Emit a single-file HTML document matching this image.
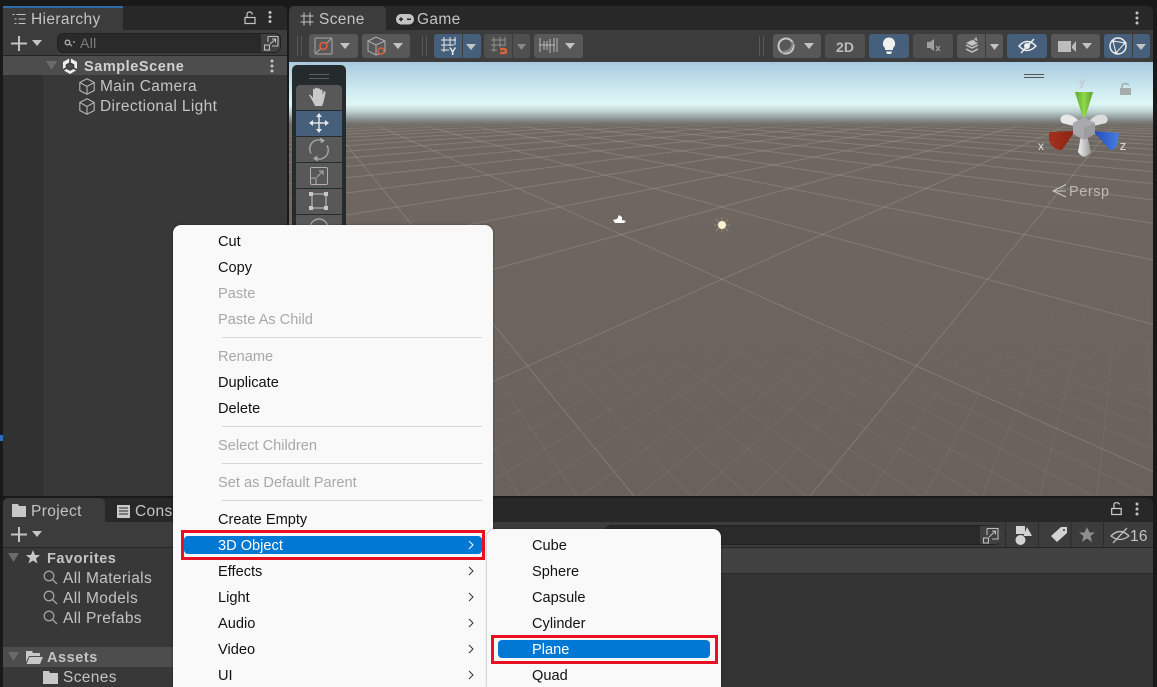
<!DOCTYPE html>
<html><head><meta charset="utf-8"><style>
html,body{margin:0;padding:0;width:1157px;height:687px;overflow:hidden;background:#191919}
body{position:relative;font-family:"Liberation Sans",sans-serif}
.b{position:absolute}
.t{position:absolute;white-space:nowrap;line-height:20px;font-size:15.5px;color:#c4c4c4;letter-spacing:.36px;margin-top:3px}
.btn{position:absolute;top:34px;height:24px;background:#585858;border-radius:3px}
.blue{background:#46607c}
.sep{position:absolute;top:0;bottom:0;width:1px;background:#3c3c3c}
.tb{position:absolute;left:296px;width:46px;height:25px;background:#585858}
svg{position:absolute;overflow:visible}
.m{position:absolute;white-space:nowrap;line-height:20px;font-size:14.6px;color:#111;font-family:"Liberation Sans",sans-serif;margin-top:1px}
.d{color:#a8a8a8}
.hr{position:absolute;left:222px;width:260px;height:1px;background:#d6d6d6}
.tri{fill:#c4c4c4}
</style></head><body>

<!-- hierarchy -->
<div class="b" style="left:0;top:435px;width:3px;height:6px;background:#2a70b8"></div>
<div class="b" style="left:3px;top:6px;width:284px;height:24px;background:#282828;border-radius:5px 5px 0 0"></div>
<div class="b" style="left:3px;top:6px;width:120px;height:24px;background:#3c3c3c;border-top:2px solid #2f6ca8;box-sizing:border-box"></div>
<div class="b" style="left:3px;top:30px;width:284px;height:25px;background:#3c3c3c"></div>
<div class="b" style="left:3px;top:55px;width:284px;height:441px;background:#383838"></div>
<div class="b" style="left:3px;top:55px;width:40px;height:441px;background:#313131"></div>
<div class="b" style="left:3px;top:55px;width:284px;height:1px;background:#232323"></div>
<div class="b" style="left:3px;top:56px;width:284px;height:19px;background:#4d4d4d"></div>
<svg style="left:12px;top:13px" width="14" height="12" fill="none" stroke="#c4c4c4" stroke-width="1"><path d="M4.500 1.500H13.500M6.500 6H13.500M6.500 10.500H13.500M.5 1.500H2.500M2.500 6H4.500M2.500 10.500H4.500"/></svg>
<div class="t" style="left:31px;top:7px">Hierarchy</div>
<svg style="left:244px;top:11px" width="14" height="14" fill="none" stroke="#c4c4c4" stroke-width="1.200"><rect x="1" y="6.500" width="10" height="6"/><path d="M3 6.500V3.500Q3 1 5.500 1Q8 1 8.500 3.500"/></svg>
<svg style="left:268px;top:10px" width="4" height="14" fill="#c4c4c4"><circle cx="2" cy="2.500" r="1.500"/><circle cx="2" cy="7" r="1.500"/><circle cx="2" cy="11.500" r="1.500"/></svg>
<svg style="left:11px;top:36px" width="34" height="15"><path d="M8 0V15M0 7.500H16" stroke="#c4c4c4" stroke-width="2"/><path class="tri" d="M21 4H31L26 10Z"/></svg>
<div class="b" style="left:57px;top:33px;width:224px;height:20px;background:#2a2a2a;border-radius:6px;border:1px solid #222;box-sizing:border-box"></div>
<div class="b" style="left:261px;top:34px;width:19px;height:18px;background:#404040;border-radius:0 5px 5px 0"></div>
<svg style="left:64px;top:39px" width="12" height="9" fill="none" stroke="#b0b0b0" stroke-width="1.300"><circle cx="3.500" cy="3.500" r="2.300"/><path d="M5.500 5L8 7M9 3H11"/></svg>
<div class="t" style="left:80px;top:30px;color:#7e7e7e;font-size:14px">All</div>
<svg style="left:264px;top:36px" width="15" height="15" fill="none" stroke="#bdbdbd" stroke-width="1.100"><path d="M4 .5H14V10H8M4 .5V6M6 8L11 3.500M8 3H11.500V6.500"/><rect x=".5" y="9" width="5" height="5"/></svg>
<svg style="left:46px;top:61px" width="12" height="10"><path d="M0 0H11L5.500 9Z" fill="#6a6a6a"/></svg>
<svg style="left:62px;top:58px" width="16" height="16"><path d="M8 0L15 4V12L8 16L1 12V4Z" fill="#eee"/><path d="M8 5L11.500 7V10L8 12L4.500 10V7ZM8 0V5M1 12L4.500 10M15 12L11.500 10" stroke="#3d3d3d" stroke-width="1.600" fill="#4d4d4d"/></svg>
<div class="t" style="left:84px;top:54px;font-weight:bold;font-size:14.500px;letter-spacing:.55px;color:#d2d2d2">SampleScene</div>
<svg style="left:270px;top:59px" width="4" height="14" fill="#c4c4c4"><circle cx="2" cy="2" r="1.500"/><circle cx="2" cy="7" r="1.500"/><circle cx="2" cy="12" r="1.500"/></svg>
<svg style="left:79px;top:78px" width="16" height="17" fill="none" stroke="#b4b4b4" stroke-width="1.100"><path d="M8 .8L15.200 4.500V12.500L8 16.200L.8 12.500V4.500ZM.8 4.500L8 8.500L15.200 4.500M8 8.500V16.200"/></svg>
<svg style="left:79px;top:98px" width="16" height="17" fill="none" stroke="#b4b4b4" stroke-width="1.100"><path d="M8 .8L15.200 4.500V12.500L8 16.200L.8 12.500V4.500ZM.8 4.500L8 8.500L15.200 4.500M8 8.500V16.200"/></svg>
<div class="t" style="left:100px;top:74px">Main Camera</div>
<div class="t" style="left:100px;top:94px">Directional Light</div>

<!-- scene header -->
<div class="b" style="left:289px;top:6px;width:864px;height:24px;background:#282828;border-radius:5px 5px 0 0"></div>
<div class="b" style="left:289px;top:6px;width:97px;height:24px;background:#3c3c3c;border-radius:5px 5px 0 0"></div>
<div class="b" style="left:289px;top:30px;width:864px;height:32px;background:#3c3c3c"></div>
<svg style="left:300px;top:12px" width="14" height="14" stroke="#c4c4c4" stroke-width="1"><path d="M4 .5V13.500M10 .5V13.500M.5 4H13.500M.5 10H13.500"/></svg>
<div class="t" style="left:319px;top:7px">Scene</div>
<svg style="left:396px;top:14px" width="18" height="11"><rect x="0" y="0" width="18" height="10.500" rx="5" fill="#c4c4c4"/><path d="M3 5.200H7M5 3.200V7.200M11 5.200H15" stroke="#282828" stroke-width="1.500"/></svg>
<div class="t" style="left:417px;top:7px">Game</div>
<svg style="left:1135px;top:11px" width="4" height="14" fill="#c4c4c4"><circle cx="2" cy="2" r="1.500"/><circle cx="2" cy="7" r="1.500"/><circle cx="2" cy="12" r="1.500"/></svg>

<!-- toolbar -->
<svg style="left:297px;top:36px" width="6" height="20" stroke="#585858"><path d="M.5 0V20M4.500 0V20"/></svg>
<svg style="left:422px;top:36px" width="6" height="20" stroke="#585858"><path d="M.5 0V20M4.500 0V20"/></svg>
<svg style="left:759px;top:36px" width="6" height="20" stroke="#585858"><path d="M.5 0V20M4.500 0V20"/></svg>
<div class="btn" style="left:309px;width:49px"></div>
<div class="btn" style="left:362px;width:48px"></div>
<div class="btn blue" style="left:434px;width:47px"><div class="sep" style="left:28px;background:#3c3c3c"></div></div>
<div class="btn" style="left:484px;width:46px;background:#4f4f4f"><div class="sep" style="left:28px"></div></div>
<div class="btn" style="left:534px;width:49px"></div>
<div class="btn" style="left:773px;width:48px"></div>
<div class="btn" style="left:825px;width:40px;background:#505050"></div>
<div class="btn blue" style="left:869px;width:40px"></div>
<div class="btn" style="left:913px;width:40px;background:#505050"></div>
<div class="btn" style="left:957px;width:46px"><div class="sep" style="left:28px"></div></div>
<div class="btn blue" style="left:1007px;width:40px"></div>
<div class="btn" style="left:1051px;width:49px"></div>
<div class="btn blue" style="left:1104px;width:46px"><div class="sep" style="left:28px"></div></div>
<svg style="left:0;top:0" width="1157" height="62">
<g class="tri"><path d="M340 43H350L345 49Z"/><path d="M393 43H403L398 49Z"/><path d="M466 44H476L471 50Z"/><path d="M517 44H526L521.500 50Z" style="fill:#8a8a8a"/><path d="M565 43H575L570 49Z"/><path d="M804 43H814L809 49Z"/><path d="M990 44H999L994.500 50Z"/><path d="M1082 43H1092L1087 49Z"/><path d="M1136 44H1146L1141 50Z"/></g>
<rect x="315" y="38" width="17" height="16" rx="1" fill="none" stroke="#aaa"/><path d="M316 53L331 39" stroke="#aaa"/><circle cx="323.500" cy="46" r="3.500" fill="#585858" stroke="#e2603a" stroke-width="1.500"/>
<path d="M368 41L376 37L385 41V52L376 55L368 51ZM368 41L376 45L385 41M376 45V55" fill="none" stroke="#b0b0b0"/><circle cx="381" cy="51" r="3" fill="#585858" stroke="#e2603a" stroke-width="1.500"/>
<path d="M441 40H456M441 45H454M441 50H449M444 37V52M450 37V46M455 37V45" stroke="#e8e8e8" fill="none"/><text x="449" y="55" font-family="Liberation Sans" font-size="11" font-weight="bold" fill="#eee">Y</text>
<path d="M491 40H505M491 45H505M491 50H497M494 37V52M500 37V47M505 37V46" stroke="#929292" fill="none"/><path d="M500 49H504Q506 49 506 51T504 53H500" fill="none" stroke="#d8633a" stroke-width="2.500"/>
<path d="M540 38V52M554 38V52M539 45H555M544 41V50M547 41V50M550 39V53M557 38V52" stroke="#b8b8b8" fill="none"/>
<circle cx="786" cy="46" r="7.500" fill="none" stroke="#c6c6c6" stroke-width="2"/><path d="M782 52Q792 52 793 42" stroke="#8a8a8a" stroke-width="2" fill="none"/>
<text x="845" y="52" text-anchor="middle" font-family="Liberation Sans" font-size="14" font-weight="bold" fill="#bdbdbd">2D</text>
<path d="M889 37.500a6 6 0 0 1 4 10.500v2h-8v-2a6 6 0 0 1 4-10.500ZM886 51.500h6l-1 2.500h-4Z" fill="#f0f0f0"/>
<path d="M927 42H930L934 39V51L930 48H927Z" fill="#a0a0a0"/><path d="M936 46L940 51M940 46L936 51" stroke="#a0a0a0" stroke-width="1.300"/>
<path d="M966 45L972 48L978 45M966 49L972 52L978 49" fill="none" stroke="#c4c4c4" stroke-width="1.500"/><path d="M966 43L972 40L978 43L972 46Z" fill="#c4c4c4"/><path d="M973 42L976 38L977 41L976 38" stroke="#c4c4c4"/>
<path d="M1019 46Q1027 37 1036 46Q1027 55 1019 46Z" fill="none" stroke="#eee" stroke-width="1.500"/><circle cx="1027" cy="46" r="3" fill="#eee"/><path d="M1021 53L1034 39" stroke="#eee" stroke-width="1.500"/>
<rect x="1058" y="41" width="13" height="11" fill="#bcbcbc"/><path d="M1072 46L1076 41V52L1072 48Z" fill="#bcbcbc"/>
<circle cx="1118" cy="46" r="8" fill="none" stroke="#eee" stroke-width="1.500"/><path d="M1113 41L1125 43L1116 53ZM1113 41L1116 53" fill="none" stroke="#eee"/><circle cx="1113" cy="41" r="1.500" fill="#eee"/><circle cx="1125" cy="43" r="1.500" fill="#eee"/><circle cx="1116" cy="53" r="1.500" fill="#eee"/>
</svg>

<!-- scene view -->
<svg id="view" style="left:289px;top:62px;overflow:hidden" width="864" height="434" viewBox="289 62 864 434">
<defs>
<linearGradient id="floor" x1="0" y1="0" x2="0" y2="1"><stop offset="0" stop-color="#706861"/><stop offset="1" stop-color="#69615b"/></linearGradient>
<linearGradient id="sky" x1="0" y1="0" x2="0" y2="1"><stop offset="0" stop-color="#a8c9e0"/><stop offset=".4" stop-color="#cdeaef"/><stop offset=".62" stop-color="#def7f5"/><stop offset=".72" stop-color="#c0d4d4" /><stop offset=".84" stop-color="#8b9292"/><stop offset=".92" stop-color="#6f6c68" stop-opacity=".8"/><stop offset="1" stop-color="#6c6560" stop-opacity="0"/></linearGradient>
<linearGradient id="mn" gradientUnits="userSpaceOnUse" x1="0" y1="270" x2="0" y2="496"><stop offset="0" stop-color="#fff" stop-opacity="0"/><stop offset="1" stop-color="#fff" stop-opacity=".07"/></linearGradient>
</defs>
<rect x="289" y="62" width="864" height="434" fill="url(#floor)"/>
<g id="minor" fill="none" stroke="url(#mn)" stroke-width="1"></g>
<g id="major" fill="none" stroke="#a6a29c" stroke-opacity=".38" stroke-width="1"></g>
<rect x="289" y="62" width="864" height="68" fill="url(#sky)"/>
</svg>
<script>
(function(){
var N='http://www.w3.org/2000/svg',mj=document.getElementById('major'),mn=document.getElementById('minor');
function add(g,vx,x){var l=document.createElementNS(N,'line');l.setAttribute('x1',vx);l.setAttribute('y1',93);l.setAttribute('x2',x);l.setAttribute('y2',496);g.appendChild(l);}
for(var k=-3;k<=34;k++){add(mj,304,634+574*k);add(mj,1140,810-574*k);}
for(var i=-60;i<=90;i++){if(((i%10)+10)%10==0)continue;add(mn,304,634+57.4*i);add(mn,1140,810-57.4*i);}
})();
</script>

<!-- tools panel -->
<div class="b" style="left:292px;top:65px;width:54px;height:170px;background:#252a2c;border-radius:5px 5px 0 0"></div>
<svg style="left:309px;top:74px" width="20" height="5" stroke="#5e6264"><path d="M0 .5H20M0 4.500H20"/></svg>
<div class="tb" style="top:85px;border-radius:4px 4px 0 0"></div>
<div class="tb" style="top:111px;background:#46607c"></div>
<div class="tb" style="top:137px"></div>
<div class="tb" style="top:163px"></div>
<div class="tb" style="top:189px"></div>
<div class="tb" style="top:215px;height:20px"></div>
<svg style="left:296px;top:85px" width="46" height="150">
<path d="M16 15L13 10Q14 9 15.500 11L17 13V4Q18.500 3 19 5V10V3Q20.500 2 21.500 4V10V3Q23 3 24 4V10V5Q25.500 4 26.500 5V10L28 6Q29.500 6 29.500 8L28 15Q27 19 26 21H19Q17.500 18 16 15Z" fill="#c8c8c8"/>
<path d="M23 30V46M15 38H31" stroke="#e0e0e0" stroke-width="1.500"/><path d="M23 28L26 32H20ZM23 48L26 44H20ZM13 38L17 35V41ZM33 38L29 35V41Z" fill="#e8e8e8"/>
<g transform="translate(0,-1.500)"><path d="M15 70A9 9 0 0 1 26 57M31 62A9 9 0 0 1 20 75" fill="none" stroke="#a8a8a8" stroke-width="1.300"/><path d="M24 54L29 57L25 60ZM22 78L17 75L21 72Z" fill="#a8a8a8"/></g>
<rect x="14.500" y="82.500" width="17" height="17" rx="1.500" fill="none" stroke="#b0b0b0"/><path d="M14.500 93H20V99M21 92L27 86M23 86H27V90" fill="none" stroke="#b0b0b0"/>
<path d="M16 109H30M16 123H30M16 109V123M30 109V123" stroke="#c8c8c8" fill="none"/><path d="M13 107h4v4h-4ZM28 107h4v4h-4ZM13 121h4v4h-4ZM28 121h4v4h-4Z" fill="#c8c8c8"/>
<circle cx="23" cy="143" r="9" fill="none" stroke="#b0b0b0" stroke-width="1.200"/><circle cx="23" cy="143" r="2" fill="#c8c8c8"/>
</svg>

<!-- gizmo -->
<svg style="left:1030px;top:65px" width="110" height="100" viewBox="1030 65 110 100">
<defs>
<linearGradient id="g1" x1="0" x2="1"><stop offset="0" stop-color="#5ca82c"/><stop offset=".5" stop-color="#8ed84c"/><stop offset="1" stop-color="#5aa02c"/></linearGradient>
<linearGradient id="g2" x1="0" x2="1"><stop offset="0" stop-color="#a5301c"/><stop offset="1" stop-color="#8a2413"/></linearGradient>
<linearGradient id="g3" x1="0" x2="1"><stop offset="0" stop-color="#1f4bb0"/><stop offset="1" stop-color="#4a7de8"/></linearGradient>
<linearGradient id="g4" x1="0" x2="1"><stop offset="0" stop-color="#f0f0f0"/><stop offset="1" stop-color="#9a9a9a"/></linearGradient>
</defs>
<path d="M1082 128L1062 123Q1058 118 1064 115Q1070 113 1078 120Z" fill="#e8e8e8"/>
<path d="M1086 128L1106 123Q1110 118 1104 115Q1098 113 1090 120Z" fill="#dcdcdc"/>
<path d="M1081 135L1078 152Q1084 161 1091 152L1087 135Z" fill="url(#g4)"/>
<path d="M1075 92H1093L1085 118H1083Z" fill="url(#g1)"/>
<path d="M1049 132L1075 131L1062 150Q1052 150 1049 140Z" fill="url(#g2)"/>
<path d="M1093 131L1119 133L1118 142Q1116 150 1110 150Z" fill="url(#g3)"/>
<path d="M1084 117L1095 123V134L1084 140L1073 134V123Z" fill="#a9a9ae"/><path d="M1084 128L1095 123V134L1084 140Z" fill="#9c9ca0"/>
<text x="1041" y="150" font-family="Liberation Sans" font-size="12" fill="#e0e0e0" text-anchor="middle">x</text>
<text x="1123" y="150" font-family="Liberation Sans" font-size="13" fill="#e0e0e0" text-anchor="middle">z</text>
<text x="1082" y="86" font-family="Liberation Sans" font-size="13" fill="#bfc6c6" text-anchor="middle">y</text>
<path d="M1120 88H1131V95H1120Z" fill="#a4acac"/><path d="M1122 88V85Q1125 82 1129 85" fill="none" stroke="#a4acac" stroke-width="1.500"/>
<path d="M1024 74.500H1044M1024 77.500H1044" stroke="#555" stroke-width="1"/>
</svg>
<svg style="left:1052px;top:184px" width="15" height="14" fill="none" stroke="#c8c8c8"><path d="M14 .5L1 7L14 13M1 7H14"/></svg>
<div class="t" style="left:1069px;top:179px;color:#bdb9b5;font-size:14.500px;letter-spacing:.55px">Persp</div>
<svg style="left:612px;top:214px" width="15" height="11"><path d="M1 6L5 5L7 1L10 3L10 6L14 7L12 9H3Z" fill="#fff"/></svg>
<svg style="left:714px;top:217px" width="16" height="16"><path d="M8 0V16M0 8H16M2 2L14 14M14 2L2 14" stroke="#8f8b7a"/><circle cx="8" cy="8" r="4" fill="#fdf1cd"/></svg>

<!-- bottom panel -->
<div class="b" style="left:3px;top:498px;width:1150px;height:24px;background:#282828;border-radius:5px 5px 0 0"></div>
<div class="b" style="left:3px;top:498px;width:102px;height:24px;background:#3c3c3c;border-radius:5px 5px 0 0"></div>
<div class="b" style="left:3px;top:522px;width:1150px;height:25px;background:#3c3c3c"></div>
<div class="b" style="left:3px;top:547px;width:1150px;height:1px;background:#262626"></div>
<div class="b" style="left:3px;top:548px;width:1150px;height:139px;background:#383838"></div>
<div class="b" style="left:173px;top:548px;width:980px;height:25px;background:#414141"></div>
<div class="b" style="left:173px;top:573px;width:980px;height:114px;background:#333"></div>
<div class="b" style="left:173px;top:573px;width:980px;height:1px;background:#2a2a2a"></div>
<div class="b" style="left:3px;top:647px;width:170px;height:20px;background:#4d4d4d"></div>
<svg style="left:12px;top:504px" width="14" height="13"><path d="M0 0H6L7 2H14V13H0Z" fill="#c8c8c8"/></svg>
<div class="t" style="left:31px;top:499px">Project</div>
<svg style="left:117px;top:505px" width="13" height="13"><path d="M0 0H13V13H0Z" fill="#c8c8c8"/><path d="M2 3H11M2 6H11M2 9H11" stroke="#282828"/></svg>
<div class="t" style="left:135px;top:499px">Console</div>
<svg style="left:11px;top:527px" width="34" height="15"><path d="M8 0V15M0 7.500H16" stroke="#c4c4c4" stroke-width="2"/><path class="tri" d="M21 4H31L26 10Z"/></svg>
<svg style="left:1111px;top:502px" width="12" height="13" fill="none" stroke="#d0d0d0" stroke-width="1.200"><rect x=".7" y="6.500" width="9.500" height="6"/><path d="M3 6.500V2.500Q3 .7 5.500 .7Q8 .7 8.500 2.500"/></svg>
<svg style="left:1135px;top:502px" width="4" height="14" fill="#c4c4c4"><circle cx="2" cy="2" r="1.500"/><circle cx="2" cy="7" r="1.500"/><circle cx="2" cy="12" r="1.500"/></svg>
<div class="b" style="left:605px;top:525px;width:396px;height:20px;background:#2a2a2a;border-radius:6px;border:1px solid #222;box-sizing:border-box"></div>
<div class="b" style="left:980px;top:526px;width:21px;height:18px;background:#404040;border-radius:0 5px 5px 0"></div>
<svg style="left:983px;top:528px" width="16" height="16" fill="none" stroke="#bdbdbd" stroke-width="1.100"><path d="M4 .5H15V11H9M4 .5V7M6 9L12 3.500M9 3H12.500V6.500"/><rect x=".5" y="10" width="5" height="5"/></svg>
<svg style="left:1005px;top:522px" width="148" height="25">
<path d="M.5 0V25M33.500 0V25M66 0V25M98.500 0V25" stroke="#2c2c2c"/>
<rect x="11" y="4" width="9" height="8" fill="#d4d4d4"/><circle cx="15.500" cy="18" r="5" fill="#d4d4d4"/><path d="M22 5L27 14H18.500Z" fill="#d4d4d4"/>
<path d="M56 5H62V11L52 20L46 14Z" fill="#d4d4d4"/><circle cx="59" cy="8" r="1" fill="#3c3c3c"/>
<path d="M82 5L84.500 10.500H90L85.500 14L87 20L82 16.500L77 20L78.500 14L74 10.500H79.500Z" fill="#8e8e8e"/>
<path d="M106 14Q115 5 124 14Q115 21 106 14ZM108 21L122 6" stroke="#bdbdbd" fill="none" stroke-width="1.300"/>
</svg>
<div class="t" style="left:1130px;top:524px;letter-spacing:.3px">16</div>
<svg style="left:8px;top:553px" width="12" height="10"><path d="M0 0H11L5.500 9Z" fill="#6a6a6a"/></svg>
<svg style="left:26px;top:550px" width="14" height="14"><path d="M7 0L9 5H14L10 8.500L11.500 13.500L7 10.500L2.500 13.500L4 8.500L0 5H5Z" fill="#c8c8c8"/></svg>
<div class="t" style="left:47px;top:546px;font-weight:bold;font-size:14.500px;letter-spacing:.55px">Favorites</div>
<svg style="left:43px;top:570px" width="15" height="15" fill="none" stroke="#a0a0a0" stroke-width="1.300"><circle cx="6" cy="6" r="4.800"/><path d="M9.500 9.500L14 14"/></svg>
<svg style="left:43px;top:590px" width="15" height="15" fill="none" stroke="#a0a0a0" stroke-width="1.300"><circle cx="6" cy="6" r="4.800"/><path d="M9.500 9.500L14 14"/></svg>
<svg style="left:43px;top:610px" width="15" height="15" fill="none" stroke="#a0a0a0" stroke-width="1.300"><circle cx="6" cy="6" r="4.800"/><path d="M9.500 9.500L14 14"/></svg>
<div class="t" style="left:63px;top:566px">All Materials</div>
<div class="t" style="left:63px;top:586px">All Models</div>
<div class="t" style="left:63px;top:606px">All Prefabs</div>
<svg style="left:8px;top:652px" width="12" height="10"><path d="M0 0H11L5.500 9Z" fill="#6a6a6a"/></svg>
<svg style="left:26px;top:651px" width="17" height="13"><path d="M0 0H6L7 2H14V5H3L0 11Z" fill="#c8c8c8"/><path d="M3.500 6H17L14 13H0.500Z" fill="#c8c8c8"/></svg>
<div class="t" style="left:47px;top:645px;font-weight:bold;font-size:14.500px;letter-spacing:.55px">Assets</div>
<svg style="left:43px;top:671px" width="15" height="13"><path d="M0 0H6L7 2H15V13H0Z" fill="#c8c8c8"/></svg>
<div class="t" style="left:63px;top:665px">Scenes</div>

<!-- context menu -->
<div class="b" style="left:173px;top:225px;width:320px;height:462px;background:#f9f9f9;border-radius:8px 8px 0 0;box-shadow:0 0 2px rgba(0,0,0,.4)"></div>
<div class="hr" style="top:337px"></div><div class="hr" style="top:426px"></div><div class="hr" style="top:463px"></div><div class="hr" style="top:500px"></div>
<div class="b" style="left:181px;top:530px;width:304px;height:30px;border:3px solid #e81123;box-sizing:border-box"></div>
<div class="b" style="left:184px;top:536px;width:298px;height:18px;background:#0078d4;border-radius:4px"></div>
<div class="m" style="left:218px;top:231px">Cut</div>
<div class="m" style="left:218px;top:257px">Copy</div>
<div class="m d" style="left:218px;top:283px">Paste</div>
<div class="m d" style="left:218px;top:309px">Paste As Child</div>
<div class="m d" style="left:218px;top:346px">Rename</div>
<div class="m" style="left:218px;top:372px">Duplicate</div>
<div class="m" style="left:218px;top:398px">Delete</div>
<div class="m d" style="left:218px;top:435px">Select Children</div>
<div class="m d" style="left:218px;top:472px">Set as Default Parent</div>
<div class="m" style="left:218px;top:509px">Create Empty</div>
<div class="m" style="left:218px;top:535px;color:#fff">3D Object</div>
<div class="m" style="left:218px;top:561px">Effects</div>
<div class="m" style="left:218px;top:587px">Light</div>
<div class="m" style="left:218px;top:613px">Audio</div>
<div class="m" style="left:218px;top:639px">Video</div>
<div class="m" style="left:218px;top:665px">UI</div>
<svg style="left:468px;top:540px" width="6" height="140" fill="none" stroke="#333" stroke-width="1"><path stroke="#fff" d="M1 1L5 5L1 9"/><path d="M1 27L5 31L1 35M1 53L5 57L1 61M1 79L5 83L1 87M1 105L5 109L1 113M1 131L5 135L1 139"/></svg>

<!-- submenu -->
<div class="b" style="left:487px;top:529px;width:234px;height:158px;background:#f9f9f9;border-radius:8px 8px 0 0;box-shadow:0 0 2px rgba(0,0,0,.4)"></div>
<div class="b" style="left:491px;top:635px;width:227px;height:29px;border:3px solid #e81123;box-sizing:border-box"></div>
<div class="b" style="left:498px;top:640px;width:212px;height:18px;background:#0078d4;border-radius:4px"></div>
<div class="m" style="left:532px;top:535px">Cube</div>
<div class="m" style="left:532px;top:561px">Sphere</div>
<div class="m" style="left:532px;top:587px">Capsule</div>
<div class="m" style="left:532px;top:613px">Cylinder</div>
<div class="m" style="left:532px;top:639px;color:#fff">Plane</div>
<div class="m" style="left:532px;top:665px">Quad</div>
</body></html>
